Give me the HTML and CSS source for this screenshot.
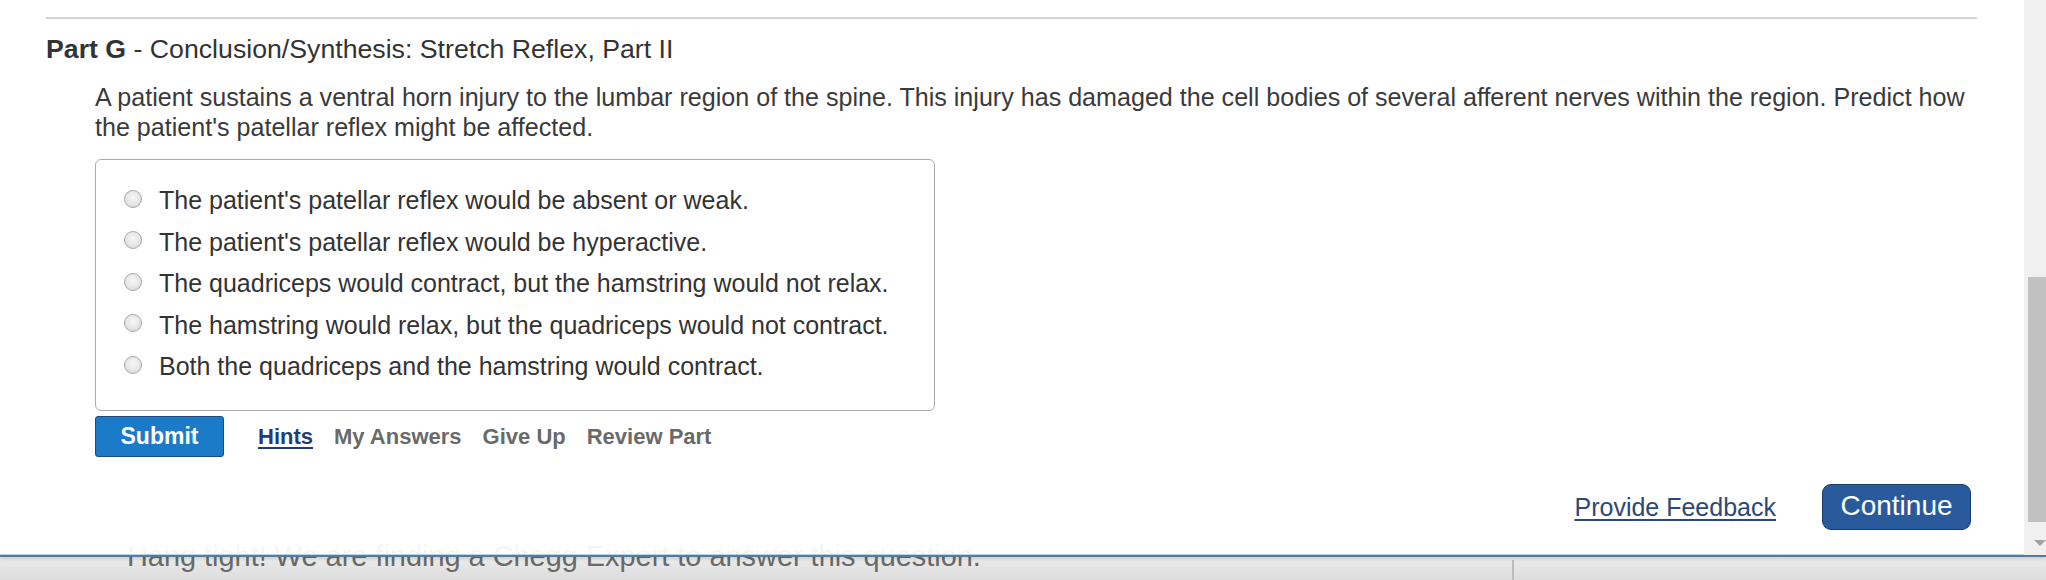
FILE: index.html
```html
<!DOCTYPE html>
<html lang="en">
<head>
<meta charset="utf-8">
<title>Part G - Conclusion/Synthesis</title>
<link rel="stylesheet" href="styles.css">
</head>
<body>
<div class="window">
  <div class="panel">
    <div class="content">
      <div class="rule"></div>
      <h2 class="title"><b>Part G</b> - Conclusion/Synthesis: Stretch Reflex, Part II</h2>
      <p class="question">A patient sustains a ventral horn injury to the lumbar region of the spine. This injury has damaged the cell bodies of several afferent nerves within the region. Predict how<br>the patient's patellar reflex might be affected.</p>
      <div class="choices">
        <label class="choice"><input type="radio" name="a" class="radio"><span>The patient's patellar reflex would be absent or weak.</span></label>
        <label class="choice"><input type="radio" name="a" class="radio"><span>The patient's patellar reflex would be hyperactive.</span></label>
        <label class="choice"><input type="radio" name="a" class="radio"><span>The quadriceps would contract, but the hamstring would not relax.</span></label>
        <label class="choice"><input type="radio" name="a" class="radio"><span>The hamstring would relax, but the quadriceps would not contract.</span></label>
        <label class="choice"><input type="radio" name="a" class="radio"><span>Both the quadriceps and the hamstring would contract.</span></label>
      </div>
      <div class="actions">
        <button class="submit">Submit</button>
        <a class="hints" href="#">Hints</a>
        <span class="act">My Answers</span>
        <span class="act">Give Up</span>
        <span class="act">Review Part</span>
      </div>
      <div class="footer">
        <a class="feedback" href="#">Provide Feedback</a>
        <button class="continue">Continue</button>
      </div>
    </div>
    <div class="scrollbar">
      <div class="track"><div class="thumb"></div></div>
      <div class="arrow"></div>
    </div>
  </div>
  <div class="below">
    <div class="hang">Hang tight! We are finding a Chegg Expert to answer this question.</div>
    <div class="side"></div>
  </div>
</div>
</body>
</html>
```

FILE: styles.css
```css
html, body {
  margin: 0;
  padding: 0;
}
body {
  width: 2046px;
  height: 580px;
  overflow: hidden;
  background: #ffffff;
  font-family: "Liberation Sans", Arial, sans-serif;
  color: #333333;
}
.window {
  display: flex;
  flex-direction: column;
  height: 580px;
}
.panel {
  position: relative;
  z-index: 1;
  height: 555px;
  display: flex;
  background: rgba(255, 255, 255, 0.93);
  border-bottom: 2px solid #5a7a94;
  box-shadow: 0 -1px 0 #b9d6e8 inset, 0 2px 3px rgba(0, 0, 0, 0.12);
}
.content {
  flex: 1;
  padding: 17px 53px 0 46px;
  display: flex;
  flex-direction: column;
}
.rule {
  height: 0;
  border-top: 2px solid #d4d4d4;
  margin-right: -6px;
}
.title {
  margin: 14px 0 0 0;
  font-size: 26.7px;
  line-height: 32px;
  font-weight: normal;
  color: #333333;
}
.title b {
  font-weight: bold;
}
.question {
  margin: 17px 0 0 49px;
  font-size: 25.1px;
  line-height: 30px;
  color: #3a3a3a;
  white-space: nowrap;
}
.choices {
  margin: 17px 0 0 49px;
  width: 840px;
  border: 1px solid #ababab;
  border-radius: 6px;
  padding: 20px 0 0 28px;
  box-sizing: border-box;
  height: 252px;
  display: flex;
  flex-direction: column;
}
.choice {
  display: flex;
  align-items: center;
  height: 41.5px;
  font-size: 25px;
  color: #333333;
}
.radio {
  appearance: none;
  -webkit-appearance: none;
  margin: 0 17px 0 0;
  width: 18px;
  height: 18px;
  border-radius: 50%;
  border: 1px solid #a9a9a9;
  background: radial-gradient(circle at 50% 40%, #f7f7f7 0%, #e6e6e6 55%, #d2d2d2 100%);
  box-sizing: border-box;
  flex: none;
  position: relative;
  top: -2px;
}
.actions {
  margin: 5px 0 0 49px;
  display: flex;
  align-items: center;
  height: 41px;
}
.submit {
  width: 129px;
  height: 41px;
  background: #1b7bc9;
  border: 1px solid #1a4d7d;
  border-radius: 3px;
  color: #ffffff;
  font-family: "Liberation Sans", Arial, sans-serif;
  font-weight: bold;
  font-size: 23px;
  padding: 0;
  margin-right: 34px;
}
.hints {
  font-weight: bold;
  font-size: 22px;
  color: #1f3c78;
  text-decoration: underline;
  text-underline-offset: 3px;
  margin-right: 21px;
}
.act {
  font-weight: bold;
  font-size: 22px;
  color: #6a6a6a;
  margin-right: 21px;
}
.footer {
  margin-top: 27px;
  display: flex;
  justify-content: flex-end;
  align-items: center;
}
.feedback {
  font-size: 25px;
  color: #2c4876;
  text-decoration: underline;
  text-underline-offset: 3px;
  margin-right: 46px;
}
.continue {
  width: 149px;
  height: 46px;
  background: #295a9c;
  border: 1px solid #1b3c6a;
  border-radius: 9px;
  color: #ffffff;
  font-family: "Liberation Sans", Arial, sans-serif;
  font-size: 28px;
  padding: 0 0 2px 0;
}
.scrollbar {
  width: 22px;
  background: #f0f0f0;
  display: flex;
  flex-direction: column;
}
.track {
  flex: 1;
  padding: 277px 0 0 4px;
}
.thumb {
  height: 245px;
  background: #c1c1c1;
}
.arrow {
  height: 24px;
  display: flex;
  justify-content: center;
  align-items: center;
}
.arrow::before {
  content: "";
  border-left: 6px solid transparent;
  border-right: 6px solid transparent;
  border-top: 6px solid #a3a3a3;
  margin-left: 10px;
}
.below {
  margin-top: -14px;
  height: 37px;
  display: grid;
  grid-template-columns: 1512px 1fr;
  background: linear-gradient(to bottom, rgba(0,0,0,0) 14px, #ebebeb 14px, #dddddd 100%);
}
.hang {
  padding: 0 0 0 127px;
  font-size: 28.9px;
  line-height: 27px;
  color: #6a6a6a;
  white-space: nowrap;
  overflow: hidden;
}
.side {
  margin-top: 17px;
  border-left: 2px solid #bcbcbc;
}
```
